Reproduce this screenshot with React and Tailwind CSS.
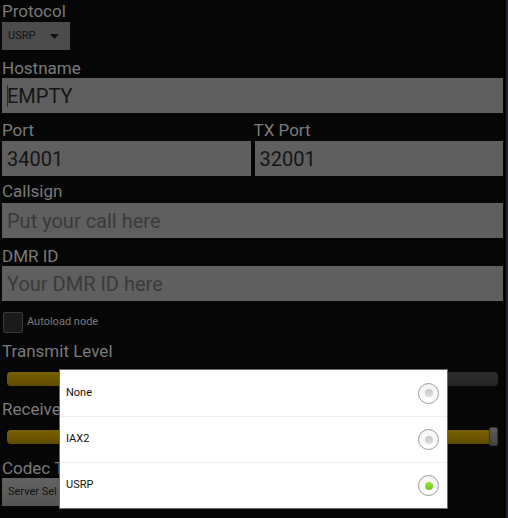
import React from "react";

function Label({ children, className = "" }) {
  return (
    <div className={"h-[20px] leading-[20px] text-[17px] text-[#7b7b7b] whitespace-nowrap " + className}>
      {children}
    </div>
  );
}

function Field({ value, placeholder, className = "", cursor = false }) {
  return (
    <div className={"h-[35px] bg-[#5f5f5f] flex items-center pl-[5px] text-[20px] " + className}>
      {cursor && <div className="w-[1px] h-[22px] bg-[#2a2a2a] -mr-[1px]" />}
      {value ? (
        <span className="text-[#141414]">{value}</span>
      ) : (
        <span className="text-[#3a3a3a]">{placeholder}</span>
      )}
    </div>
  );
}

function Radio({ checked }) {
  return (
    <div className="w-[21px] h-[21px] rounded-full border border-[#9a9a9a] bg-gradient-to-b from-[#f4f4f4] to-[#ffffff] flex items-center justify-center">
      <div
        className={
          "w-[8px] h-[8px] rounded-full " +
          (checked
            ? "bg-gradient-to-b from-[#9be43a] to-[#6cc417]"
            : "bg-gradient-to-b from-[#c6c6c6] to-[#dedede]")
        }
      />
    </div>
  );
}

export default function App() {
  const options = [
    { label: "None", checked: false },
    { label: "IAX2", checked: false },
    { label: "USRP", checked: true },
  ];
  return (
    <div
      className="relative w-[508px] h-[518px] overflow-hidden bg-[#060606] flex"
      style={{ fontFamily: "Roboto, 'Noto Sans', sans-serif" }}
    >
      <div className="w-[506px] flex flex-col pl-[2px] pr-[3px]">
        <Label className="mt-[1px]">Protocol</Label>
        <div className="mt-[1px] w-[68px] h-[28px] bg-[#4c4c4c] flex items-center pl-[6px] text-[11px] text-[#111]">
          <span>USRP</span>
          <svg className="ml-[15px]" width="9" height="5" viewBox="0 0 9 5">
            <path d="M0 0 L9 0 L4.5 5 Z" fill="#111" />
          </svg>
        </div>

        <Label className="mt-[8px]">Hostname</Label>
        <Field value="EMPTY" cursor />

        <div className="mt-[7px] flex gap-[4px]">
          <div className="flex-1 flex flex-col">
            <Label>Port</Label>
            <Field value="34001" className="mt-[1px]" />
          </div>
          <div className="flex-1 flex flex-col">
            <Label className="-ml-[1px]">TX Port</Label>
            <Field value="32001" className="mt-[1px]" />
          </div>
        </div>

        <Label className="mt-[5px]">Callsign</Label>
        <Field placeholder="Put your call here" className="mt-[2px]" />

        <Label className="mt-[8px]">DMR ID</Label>
        <Field placeholder="Your DMR ID here" />

        <div className="mt-[11px] h-[21px] flex items-center">
          <div className="ml-[1px] w-[20px] h-[21px] rounded-[2px] border border-[#3a3a3a] bg-[#1b1b1b]" />
          <span className="ml-[4px] text-[11px] text-[#7b7b7b]">Autoload node</span>
        </div>

        <Label className="mt-[8px]">Transmit Level</Label>
        <div className="mt-[11px] ml-[5px] mr-[5px] h-[14px] rounded-[4px] bg-gradient-to-b from-[#2e2e2e] to-[#222] flex overflow-hidden">
          <div className="w-[50%] h-full bg-gradient-to-b from-[#7a6200] to-[#5e4b00]" />
        </div>

        <Label className="mt-[13px]">Receive Level</Label>
        <div className="mt-[8px] ml-[5px] mr-[5px] h-[19px] flex items-center">
          <div className="flex-1 h-[14px] rounded-l-[4px] bg-gradient-to-b from-[#7a6200] to-[#5e4b00] -mr-[2px]" />
          <div className="w-[9px] h-[19px] rounded-[2px] bg-gradient-to-b from-[#5e5e5e] to-[#444] border border-[#333]" />
        </div>

        <Label className="mt-[12px]">Codec Type</Label>
        <div className="w-[57px] h-[28px] bg-gradient-to-b from-[#626262] to-[#545454] flex items-center pl-[6px] text-[11px] text-[#111] whitespace-nowrap">
          Server Sel
        </div>
      </div>
      <div className="w-[2px] h-full bg-[#22223c]" />

      <div className="absolute left-[59px] top-[369px] w-[389px] bg-white border border-[#6a6a6a] flex flex-col">
        {options.map((o, i) => (
          <div
            key={o.label}
            className={
              "h-[46px] flex items-center justify-between pl-[6px] pr-[8px] " +
              (i > 0 ? "border-t border-[#efefef]" : "")
            }
          >
            <span className="text-[11px] text-[#111]">{o.label}</span>
            <Radio checked={o.checked} />
          </div>
        ))}
      </div>
    </div>
  );
}
